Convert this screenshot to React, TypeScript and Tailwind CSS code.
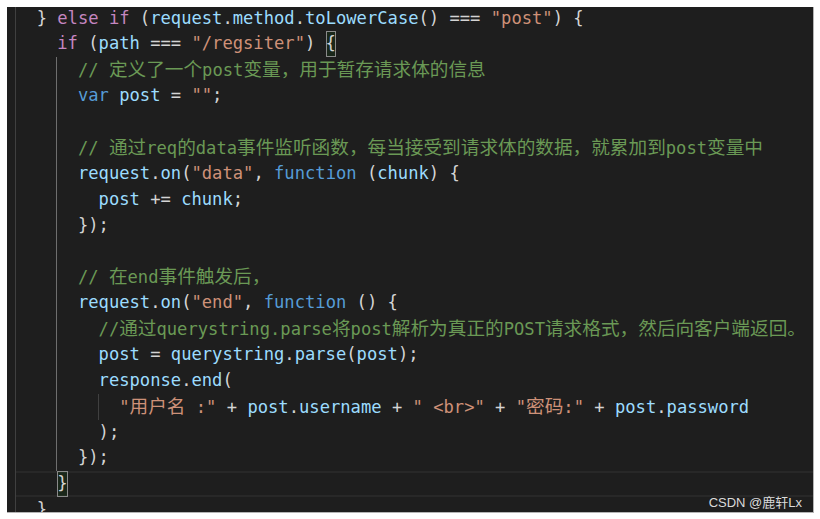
import React from "react";

type Tok = [string, string];

interface Line {
  toks: Tok[];
  guides: { left: string; active?: boolean }[];
  current?: boolean;
}

const K = "text-[#c586c0]";
const B = "text-[#569cd6]";
const V = "text-[#9cdcfe]";
const S = "text-[#ce9178]";
const C = "text-[#6a9955]";
const P = "text-[#d4d4d4]";
const BOX = "box";

const CJK = /([\u3000-\u303f\u4e00-\u9fff\uff00-\uffef]+)/;

// split a token so that Chinese runs get the wider editor fallback size
const Segments: React.FC<{ text: string }> = ({ text }) => (
  <>
    {text.split(CJK).map((part, i) =>
      i % 2 === 1 ? (
        <span key={i} className="text-[18.65px]">
          {part}
        </span>
      ) : (
        <React.Fragment key={i}>{part}</React.Fragment>
      )
    )}
  </>
);

const g0 = { left: "left-[-1px]" };
const g4 = { left: "left-[40.3px]", active: true };
const g8 = { left: "left-[81.6px]" };

const lines: Line[] = [
  {
    toks: [[P, "  } "], [K, "else if"], [P, " ("], [V, "request"], [P, "."], [V, "method"], [P, "."], [V, "toLowerCase"], [P, "() === "], [S, '"post"'], [P, ") {"]],
    guides: [g0],
  },
  {
    toks: [[P, "    "], [K, "if"], [P, " ("], [V, "path"], [P, " === "], [S, '"/regsiter"'], [P, ") "], [BOX, "{"]],
    guides: [g0],
  },
  { toks: [[C, "      // 定义了一个post变量，用于暂存请求体的信息"]], guides: [g0, g4] },
  { toks: [[P, "      "], [B, "var"], [P, " "], [V, "post"], [P, " = "], [S, '""'], [P, ";"]], guides: [g0, g4] },
  { toks: [], guides: [g0, g4] },
  { toks: [[C, "      // 通过req的data事件监听函数，每当接受到请求体的数据，就累加到post变量中"]], guides: [g0, g4] },
  {
    toks: [[P, "      "], [V, "request"], [P, "."], [V, "on"], [P, "("], [S, '"data"'], [P, ", "], [B, "function"], [P, " ("], [V, "chunk"], [P, ") {"]],
    guides: [g0, g4],
  },
  { toks: [[P, "        "], [V, "post"], [P, " += "], [V, "chunk"], [P, ";"]], guides: [g0, g4] },
  { toks: [[P, "      });"]], guides: [g0, g4] },
  { toks: [], guides: [g0, g4] },
  { toks: [[C, "      // 在end事件触发后，"]], guides: [g0, g4] },
  {
    toks: [[P, "      "], [V, "request"], [P, "."], [V, "on"], [P, "("], [S, '"end"'], [P, ", "], [B, "function"], [P, " () {"]],
    guides: [g0, g4],
  },
  { toks: [[C, "        //通过querystring.parse将post解析为真正的POST请求格式，然后向客户端返回。"]], guides: [g0, g4] },
  {
    toks: [[P, "        "], [V, "post"], [P, " = "], [V, "querystring"], [P, "."], [V, "parse"], [P, "("], [V, "post"], [P, ");"]],
    guides: [g0, g4],
  },
  { toks: [[P, "        "], [V, "response"], [P, "."], [V, "end"], [P, "("]], guides: [g0, g4] },
  {
    toks: [
      [P, "          "], [S, '"用户名 :"'], [P, " + "], [V, "post"], [P, "."], [V, "username"], [P, " + "],
      [S, '" <br>"'], [P, " + "], [S, '"密码:"'], [P, " + "], [V, "post"], [P, "."], [V, "password"],
    ],
    guides: [g0, g4, g8],
  },
  { toks: [[P, "        );"]], guides: [g0, g4] },
  { toks: [[P, "      });"]], guides: [g0, g4] },
  { toks: [[P, "    "], [BOX, "}"]], guides: [g0], current: true },
  { toks: [[P, "  }"]], guides: [g0] },
];

const CodeLine: React.FC<{ line: Line }> = ({ line }) => (
  <div
    className={
      "relative h-[25.88px] leading-[25.88px] whitespace-pre " +
      (line.current ? "shadow-[inset_0_2px_0_#282828,inset_0_-2px_0_#282828]" : "")
    }
  >
    {line.guides.map((g, i) => (
      <div
        key={i}
        className={`absolute top-0 bottom-0 w-px ${g.left} ${g.active ? "bg-[#6e6e6e]" : "bg-[#404040]"}`}
      />
    ))}
    {line.toks.map(([cls, text], i) =>
      cls === BOX ? (
        <span
          key={i}
          className="inline-block h-[25.88px] align-top text-[#d4d4d4] bg-[#00640020] shadow-[inset_0_0_0_1px_#8a8a8a]"
        >
          {text}
        </span>
      ) : (
        <span key={i} className={cls}>
          <Segments text={text} />
        </span>
      )
    )}
  </div>
);

export default function App() {
  return (
    <div className="w-[820px] h-[519px] bg-white pt-[7px] pl-[7px] overflow-hidden">
      <div className="relative w-[807px] h-[506px] bg-[#1e1e1e] border-r border-b border-[#b4b4b4] overflow-hidden">
        <div
          className="pl-[9px] -mt-[1.5px] text-[17.15px] antialiased"
          style={{ fontFamily: '"DejaVu Sans Mono", "Noto Sans CJK SC", monospace' }}
        >
          {lines.map((line, i) => (
            <CodeLine key={i} line={line} />
          ))}
        </div>
        <div
          className="absolute right-[11px] bottom-[2px] text-[13px] leading-[15px] text-[#dadada]"
          style={{ fontFamily: '"Liberation Sans", "Noto Sans CJK SC", sans-serif' }}
        >
          CSDN @鹿轩Lx
        </div>
      </div>
    </div>
  );
}
